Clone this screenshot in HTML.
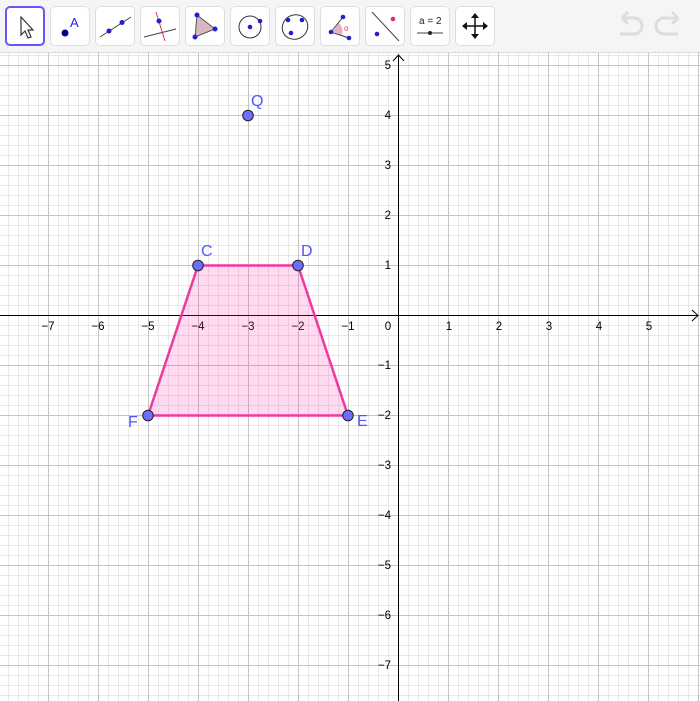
<!DOCTYPE html>
<html><head><meta charset="utf-8"><style>
body{margin:0;width:700px;height:701px;overflow:hidden;background:#fff;font-family:"Liberation Sans",sans-serif}
#tb{position:absolute;left:0;top:0;width:700px;height:52px;background:#f5f5f5;border-bottom:1px solid #ddd}
.b{position:absolute;top:6px;width:38px;height:38px;border:1px solid #ddd;border-radius:5px;background:#fff}
.b svg{position:absolute;left:0;top:0}
.sel{border:2px solid #6557ff;width:36px;height:36px}
</style></head><body>
<svg width="700" height="701" style="position:absolute;left:0;top:0">
<defs>
<pattern id="mn" x="398" y="315" width="10" height="10" patternUnits="userSpaceOnUse"><path d="M0.5 0V10M0 0.5H10" stroke="#e8e8e8" stroke-width="1"/></pattern>
<pattern id="mj" x="398" y="315" width="50" height="50" patternUnits="userSpaceOnUse"><path d="M0.5 0V50M0 0.5H50" stroke="#c4c4c4" stroke-width="1"/></pattern>
</defs>
<rect x="0" y="53" width="700" height="648" fill="url(#mn)"/>
<rect x="0" y="53" width="700" height="648" fill="url(#mj)"/>
<line x1="0" y1="315.5" x2="698" y2="315.5" stroke="#000"/>
<line x1="398.5" y1="55" x2="398.5" y2="701" stroke="#000"/>
<path d="M692 310L698 315.5L692 321M393 61L398.5 55L404 61" fill="none" stroke="#000"/>
<g font-size="11.5" fill="#000" text-anchor="middle">
<text x="48" y="330">−7</text><text x="98" y="330">−6</text><text x="148" y="330">−5</text><text x="198" y="330">−4</text><text x="248" y="330">−3</text><text x="298" y="330">−2</text><text x="348" y="330">−1</text><text x="388" y="330">0</text>
<text x="449" y="330">1</text><text x="499" y="330">2</text><text x="549" y="330">3</text><text x="599" y="330">4</text><text x="649" y="330">5</text>
</g>
<g font-size="11.5" fill="#000" text-anchor="end">
<text x="391" y="69">5</text><text x="391" y="119">4</text><text x="391" y="169">3</text><text x="391" y="219">2</text><text x="391" y="269">1</text>
<text x="391" y="369">−1</text><text x="391" y="419">−2</text><text x="391" y="469">−3</text><text x="391" y="519">−4</text><text x="391" y="569">−5</text><text x="391" y="619">−6</text><text x="391" y="669">−7</text>
</g>
<polygon points="198,265.5 298,265.5 348,415.5 148,415.5" fill="rgba(255,51,170,0.18)" stroke="#ee3a9c" stroke-width="2.5"/>
<g fill="#6d6dff" stroke="#222" stroke-width="1">
<circle cx="198" cy="265.5" r="5.3"/><circle cx="298" cy="265.5" r="5.3"/><circle cx="348" cy="415.5" r="5.3"/><circle cx="148" cy="415.5" r="5.3"/><circle cx="248" cy="115.5" r="5.3"/>
</g>
<g font-size="16" fill="#5252ff">
<text x="201" y="256">C</text><text x="301" y="256">D</text><text x="357" y="426">E</text><text x="128" y="427">F</text><text x="251" y="106">Q</text>
</g>
</svg>
<div id="tb">
<div class="b sel" style="left:5px"><svg width="36" height="36"><path d="M14 9L14 27L18 23L21 30L24 29L21 22L26 22Z" fill="#fff" stroke="#333" stroke-width="1.2"/></svg></div>
<div class="b" style="left:50px"><svg width="38" height="38"><circle cx="14" cy="26" r="3.5" fill="#00008b"/><text x="19" y="20" font-size="13" fill="#2020ff" font-family="Liberation Sans">A</text></svg></div>
<div class="b" style="left:95px"><svg width="38" height="38"><line x1="4" y1="30" x2="35" y2="10" stroke="#444"/><circle cx="13" cy="24" r="2.5" fill="#2020d0"/><circle cx="26" cy="15.5" r="2.5" fill="#2020d0"/></svg></div>
<div class="b" style="left:140px"><svg width="38" height="38"><line x1="3" y1="30" x2="35" y2="22" stroke="#444"/><line x1="15" y1="5" x2="24" y2="34" stroke="#e03050"/><circle cx="18" cy="14" r="2.5" fill="#2020d0"/></svg></div>
<div class="b" style="left:185px"><svg width="38" height="38"><polygon points="11,8 29,22 9,30" fill="#d8b8c0" stroke="#555"/><circle cx="11" cy="8" r="2.5" fill="#2020d0"/><circle cx="29" cy="22" r="2.5" fill="#2020d0"/><circle cx="9" cy="30" r="2.5" fill="#2020d0"/></svg></div>
<div class="b" style="left:230px"><svg width="38" height="38"><circle cx="19" cy="20" r="11" fill="none" stroke="#333"/><circle cx="19" cy="20" r="2.3" fill="#2020d0"/><circle cx="29" cy="14" r="2.3" fill="#2020d0"/></svg></div>
<div class="b" style="left:275px"><svg width="38" height="38"><ellipse cx="19" cy="20" rx="13" ry="12" transform="rotate(-30 19 20)" fill="none" stroke="#333"/><circle cx="12" cy="13" r="2.3" fill="#2020d0"/><circle cx="26" cy="13" r="2.3" fill="#2020d0"/><circle cx="15" cy="26" r="2.3" fill="#2020d0"/></svg></div>
<div class="b" style="left:320px"><svg width="38" height="38"><path d="M10 25L22 10M10 25L28 31" stroke="#333" fill="none"/><path d="M10 25L18 16A12 12 0 0 1 21 28Z" fill="#e8b0c0"/><text x="23" y="24" font-size="8" fill="#e03050">o</text><circle cx="10" cy="25" r="2.3" fill="#2020d0"/><circle cx="22" cy="10" r="2.3" fill="#2020d0"/><circle cx="28" cy="31" r="2.3" fill="#2020d0"/></svg></div>
<div class="b" style="left:365px"><svg width="38" height="38"><line x1="6" y1="5" x2="33" y2="34" stroke="#444"/><circle cx="27" cy="12" r="2.3" fill="#e03050"/><circle cx="11" cy="27" r="2.3" fill="#2020d0"/></svg></div>
<div class="b" style="left:410px"><svg width="38" height="38"><text x="8" y="17" font-size="10" fill="#222" font-family="Liberation Sans">a = 2</text><line x1="6" y1="26" x2="32" y2="26" stroke="#444"/><circle cx="19" cy="26" r="2" fill="#222"/></svg></div>
<div class="b" style="left:455px"><svg width="38" height="38"><path d="M19 7V31M7 19H31" stroke="#111" stroke-width="1.5"/><path d="M19 6L15 11H23ZM19 32L15 27H23ZM6 19L11 15V23ZM32 19L27 15V23Z" fill="#111"/></svg></div>
<svg width="90" height="40" style="position:absolute;left:610px;top:6px"><path d="M12 12H24A8 8 0 0 1 24 28H10M12 12L18 6M12 12L18 18" fill="none" stroke="#ddd" stroke-width="3"/><path d="M68 12H54A8 8 0 0 0 54 28H68M68 12L62 6M68 12L62 18" fill="none" stroke="#ddd" stroke-width="3"/></svg>
</div>
</body></html>
